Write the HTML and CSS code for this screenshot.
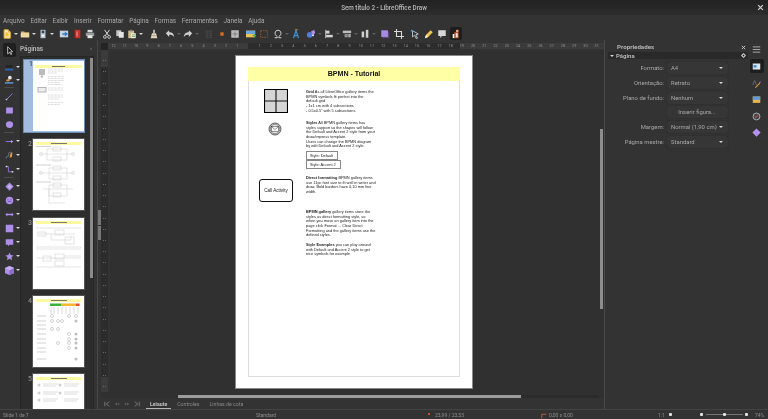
FILE: index.html
```html
<!DOCTYPE html>
<html lang="pt">
<head>
<meta charset="utf-8">
<title>Sem título 2 - LibreOffice Draw</title>
<link rel="stylesheet" href="styles.css">
</head>
<body>
<svg class="defs" aria-hidden="true">
  <symbol id="new" viewBox="0 0 12 12"><path d="M2.5 1h5l2.5 2.5V11h-7.500z" fill="#f7f2dc"/><path d="M2.500 1h5v2.500H10V11H2.500z" fill="none" stroke="#e0a92c" stroke-width="1.200"/><rect x="4" y="4" width="4" height="5" fill="#f0c040"/></symbol>
  <symbol id="open" viewBox="0 0 12 12"><path d="M1 3h4l1 1h5v6H1z" fill="#d9b778"/><path d="M1 5h10v5H1z" fill="#efd9a6"/></symbol>
  <symbol id="save" viewBox="0 0 12 12"><path d="M3 1h6v10H3z" fill="#b9c4d0"/><rect x="4.500" y="2" width="3" height="3" fill="#39434f"/><rect x="4.500" y="7" width="3" height="2" fill="#fff"/></symbol>
  <symbol id="export" viewBox="0 0 12 12"><rect x="1" y="2" width="10" height="8" fill="#c9d4e0"/><path d="M4 5h3V3l4 3-4 3V7H4z" fill="#2f7fd0"/></symbol>
  <symbol id="pdf" viewBox="0 0 12 12"><rect x="3" y="1" width="7" height="10" fill="#c8322c"/><path d="M2 2l2-1v10l-2-1z" fill="#7d1f1b"/><path d="M6 3v6" stroke="#f0c0b8"/></symbol>
  <symbol id="print" viewBox="0 0 12 12"><rect x="3" y="1" width="6" height="3" fill="#d8d8d8"/><rect x="1" y="4.500" width="10" height="4" fill="#9a9a9a"/><rect x="3" y="7.500" width="6" height="3.500" fill="#e8e8e8"/></symbol>
  <symbol id="cut" viewBox="0 0 12 12"><path d="M3 1l5 7M9 1L4 8" stroke="#d8d8d8" stroke-width="1.200"/><circle cx="3.500" cy="9.500" r="1.700" fill="none" stroke="#d8d8d8"/><circle cx="8.500" cy="9.500" r="1.700" fill="none" stroke="#d8d8d8"/></symbol>
  <symbol id="copy" viewBox="0 0 12 12"><rect x="1.500" y="1.500" width="6" height="7" fill="#c4c4c4"/><rect x="4.500" y="3.500" width="6" height="7" fill="#e4e4e4"/></symbol>
  <symbol id="paste" viewBox="0 0 12 12"><rect x="1.500" y="2" width="7" height="9" fill="#d0c090"/><rect x="3.500" y="1" width="3" height="2" fill="#888"/><rect x="5" y="5" width="5.500" height="6" fill="#eee"/><path d="M6 7h3.500M6 9h3.500" stroke="#6fa04a"/></symbol>
  <symbol id="clone" viewBox="0 0 12 12"><path d="M5 1h2v4H5z" fill="#c9c9c9"/><path d="M3.500 5h5L10 11H2z" fill="#e2d8b8"/><path d="M3 8h6" stroke="#999"/></symbol>
  <symbol id="undo" viewBox="0 0 12 12"><path d="M1 5l4-3.500V4c3 0 6 1.500 6 6-1-2.500-3-3-6-3v2.500z" fill="#cfcfcf"/></symbol>
  <symbol id="redo" viewBox="0 0 12 12"><path d="M11 5L7 1.500V4C4 4 1 5.500 1 10c1-2.500 3-3 6-3v2.500z" fill="#cfcfcf"/></symbol>
  <symbol id="grid" viewBox="0 0 12 12"><path d="M2 2.500h8M2 5h8M2 7.500h8M2 10h8M3.500 2v8M8.500 2v8" stroke="#4c4c4c" stroke-width=".8"/></symbol>
  <symbol id="point" viewBox="0 0 12 12"><rect x="4" y="4" width="4" height="4" fill="#d87020"/></symbol>
  <symbol id="glue" viewBox="0 0 12 12"><rect x="1.500" y="1.500" width="9" height="9" fill="#bcbcbc"/><path d="M6 3v6M3 6h6" stroke="#777"/></symbol>
  <symbol id="image" viewBox="0 0 12 12"><rect x="0" y="2" width="11" height="8" fill="#e9c25c"/><rect x="0" y="2" width="11" height="4" fill="#6aa6d8"/><path d="M8 8h4M10 6v4" stroke="#59b04a" stroke-width="1.500"/></symbol>
  <symbol id="dots" viewBox="0 0 12 12"><path d="M2 2h8v8H2z" fill="none" stroke="#b06a30" stroke-dasharray="1.500 1.500"/></symbol>
  <symbol id="omega" viewBox="0 0 12 12"><path d="M2 10.500h3V9C3.500 8 2.500 6.800 2.500 5.200 2.500 3 4 1.500 6 1.500s3.500 1.500 3.500 3.700C9.500 6.800 8.500 8 7 9v1.500h3" fill="none" stroke="#d4d4d4" stroke-width="1.200"/></symbol>
  <symbol id="fontwork" viewBox="0 0 12 12"><path d="M3 11L6 2l3 9M4 8h4" fill="none" stroke="#3d93d8" stroke-width="1.500"/><path d="M5 1h3" stroke="#e0a030"/></symbol>
  <symbol id="trans" viewBox="0 0 12 12"><circle cx="4.500" cy="7" r="3.500" fill="#4f7fd8"/><path d="M6 3l4-2 1 4-3 2z" fill="#b88be8"/><circle cx="8.500" cy="7.500" r="1.200" fill="#eee"/></symbol>
  <symbol id="align" viewBox="0 0 12 12"><path d="M2 1v10" stroke="#d4d4d4"/><rect x="2.500" y="2" width="4" height="3.500" fill="#d4d4d4"/><rect x="2.500" y="7" width="8" height="3" fill="#d4d4d4"/></symbol>
  <symbol id="arrange" viewBox="0 0 12 12"><rect x="1" y="2" width="10" height="3" fill="#bdbdbd"/><rect x="3" y="6" width="4" height="4" fill="#8d8d8d"/><rect x="7.500" y="6" width="3" height="4" fill="#aaa"/></symbol>
  <symbol id="distrib" viewBox="0 0 12 12"><rect x="2" y="3" width="3" height="7" fill="#d0d0d0"/><rect x="7" y="1" width="3" height="9.500" fill="#d0d0d0"/></symbol>
  <symbol id="shadow" viewBox="0 0 12 12"><rect x="3" y="3" width="8" height="8" fill="#5b4a7a"/><rect x="1.500" y="1.500" width="8" height="8" fill="#a78be0"/></symbol>
  <symbol id="crop" viewBox="0 0 12 12"><path d="M3 0v9h9M0 3h9v9" fill="none" stroke="#d8d8d8" stroke-width="1.300"/></symbol>
  <symbol id="pts" viewBox="0 0 12 12"><path d="M3 2l7 4-3 1 2 4-1.500.5-2-4L3 9.500z" fill="none" stroke="#c9d5e0"/><rect x="1" y="1" width="2" height="2" fill="#3d93d8"/></symbol>
  <symbol id="pencil" viewBox="0 0 12 12"><path d="M1 11l1.500-4L8 1.500 10.500 4 5 9.500z" fill="#f0c64e"/><path d="M1 11l1.500-4 2.500 2.500z" fill="#fff0c8"/></symbol>
  <symbol id="note" viewBox="0 0 12 12"><path d="M1.500 1.500h9v7H6L4 11V8.500H1.500z" fill="#d8d8d8"/></symbol>
  <symbol id="show" viewBox="0 0 12 12"><path d="M6 1h3v3H6z" fill="#e9a080"/><path d="M4 4h5v7H4z" fill="#d8652e"/><path d="M2 6h2v5H2z" fill="#ececec"/><path d="M6 5h2v5H6z" fill="#f2e8e0"/></symbol>
  <symbol id="select" viewBox="0 0 12 12"><path d="M3.500 1v9.500l2.500-2 1.700 3 1.300-.7-1.700-3 3-.3z" fill="none" stroke="#ddd"/></symbol>
  <symbol id="lcolor" viewBox="0 0 12 12"><rect x="1" y="3" width="9" height="3" fill="#222"/><rect x="0" y="7.500" width="11" height="2.500" fill="#2c64b4"/></symbol>
  <symbol id="fcolor" viewBox="0 0 12 12"><circle cx="6.500" cy="3.500" r="2.500" fill="#e8e8e8"/><path d="M1 7l4-2 2 2-3 2z" fill="#d88a3c"/><rect x="0" y="9.500" width="11" height="2" fill="#5b95dc"/></symbol>
  <symbol id="line" viewBox="0 0 12 12"><path d="M2 10l8-8" stroke="#9b6fe0" stroke-width="1.200"/><rect x="1" y="9" width="2" height="2" fill="#c9b4ef"/></symbol>
  <symbol id="rect" viewBox="0 0 12 12"><rect x="1.500" y="2" width="9" height="8" fill="#ad8fe8"/></symbol>
  <symbol id="ell" viewBox="0 0 12 12"><ellipse cx="6" cy="6" rx="4.800" ry="4.500" fill="#ad8fe8"/></symbol>
  <symbol id="arrowl" viewBox="0 0 12 12"><path d="M1 6h8" stroke="#8d68d8" stroke-width="1.500"/><path d="M8 4l3 2-3 2z" fill="#c0a8ef"/></symbol>
  <symbol id="curve" viewBox="0 0 12 12"><path d="M2 10c-2-4 4-2 3-5s2-4 4-3" fill="none" stroke="#6f7f9f" stroke-width="1.200"/><path d="M6 9l1.500-6L10 2 9 8z" fill="#e8a238"/></symbol>
  <symbol id="conn" viewBox="0 0 12 12"><path d="M2 2h2.500v7H10" fill="none" stroke="#9b6fe0" stroke-width="1.200"/><rect x="1" y="1" width="2" height="2" fill="#ddd"/><rect x="9" y="8" width="2" height="2" fill="#ddd"/></symbol>
  <symbol id="diam" viewBox="0 0 12 12"><path d="M6 0.500L11.500 6 6 11.500.5 6z" fill="#ad8fe8"/><circle cx="6" cy="6" r="2" fill="#c9b4ef"/></symbol>
  <symbol id="smile" viewBox="0 0 12 12"><circle cx="6" cy="6" r="5" fill="#ad8fe8"/><circle cx="4" cy="5" r=".8" fill="#5b3f96"/><circle cx="8" cy="5" r=".8" fill="#5b3f96"/><path d="M3.500 8c1.500-1.200 3.500-1.200 5 0" fill="none" stroke="#5b3f96"/></symbol>
  <symbol id="barrow" viewBox="0 0 12 12"><path d="M.5 6L3 3.500v1.500h6V3.500L11.500 6 9 8.500V7H3v1.500z" fill="#ad8fe8"/></symbol>
  <symbol id="flow" viewBox="0 0 12 12"><rect x="1" y="1" width="10" height="10" fill="#ad8fe8"/></symbol>
  <symbol id="call" viewBox="0 0 12 12"><path d="M1 1.500h10v7.500H6L4 11V9H1z" fill="#ad8fe8"/></symbol>
  <symbol id="star" viewBox="0 0 12 12"><path d="M6 .5l1.600 3.600 3.900.4-2.900 2.600.8 3.900L6 9l-3.400 2 .8-3.900L.5 4.500l3.900-.4z" fill="#ad8fe8"/></symbol>
  <symbol id="cube" viewBox="0 0 12 12"><path d="M6 0l6 2.500v7L6 12 0 9.500v-7z" fill="#ad8fe8"/><path d="M6 5.500L12 2.500v7L6 12z" fill="#8a6ccf"/><path d="M6 5.500L0 2.500 6 0l6 2.500z" fill="#c4aef0"/></symbol>
  <symbol id="menu" viewBox="0 0 12 12"><path d="M1 2.500h10M1 6h10M1 9.500h10" stroke="#aaa" stroke-width="1.300"/></symbol>
  <symbol id="props" viewBox="0 0 12 12"><rect x="1" y="2" width="10" height="8" fill="#d8e4f0"/><rect x="2" y="4" width="4" height="3.500" fill="#4d93d8"/></symbol>
  <symbol id="styles" viewBox="0 0 12 12"><path d="M1 8l2.500-6L6 8" fill="none" stroke="#777"/><path d="M4 11l6-6 1 1-6 6z" fill="#e09848"/><path d="M9 5l2-2 1 1-2 2z" fill="#a068c8"/></symbol>
  <symbol id="gallery" viewBox="0 0 12 12"><rect x="1" y="2" width="10" height="8.500" fill="#e9b54c"/><rect x="1" y="2" width="10" height="4.500" fill="#5d9cd8"/></symbol>
  <symbol id="nav" viewBox="0 0 12 12"><circle cx="6" cy="6" r="4.600" fill="#444" stroke="#b8c4d0" stroke-width="1.100"/><path d="M8.500 3.500L6.500 6.500 3.500 8.500 5.500 5.500z" fill="#d85a48"/></symbol>
  <symbol id="shapes" viewBox="0 0 12 12"><path d="M6 .5L11.500 6 6 11.500.5 6z" fill="#b690f0"/></symbol>
  <symbol id="gear" viewBox="0 0 12 12"><circle cx="6" cy="6" r="3.500" fill="none" stroke="#ccc" stroke-width="2.500"/><path d="M6 0v3M6 9v3M0 6h3M9 6h3" stroke="#ccc" stroke-width="1.500"/></symbol>
  <symbol id="close" viewBox="0 0 12 12"><path d="M2 2l8 8M10 2l-8 8" stroke="#cfcfcf" stroke-width="2.200"/></symbol>
  <symbol id="gridpic" viewBox="0 0 24 24"><rect width="24" height="24" fill="#fff"/><path d="M2 0v24M4 0v24M6 0v24M8 0v24M10 0v24M14 0v24M16 0v24M18 0v24M20 0v24M22 0v24M0 2h24M0 4h24M0 6h24M0 8h24M0 10h24M0 14h24M0 16h24M0 18h24M0 20h24M0 22h24" stroke="#888" stroke-width=".4"/><path d="M.5.500h23v23H.5zM12 0v24M0 12h24" fill="none" stroke="#000" stroke-width="1.100"/></symbol>
  <symbol id="navfirst" viewBox="0 0 8 8"><path d="M1 1v6M7 1L3 4l4 3" fill="none" stroke="#8a8a8a"/></symbol>
  <symbol id="navprev" viewBox="0 0 8 8"><path d="M1 4l3-2v4zM4 4l3-2v4z" fill="#5c5c5c"/></symbol>
  <symbol id="navnext" viewBox="0 0 8 8"><path d="M7 4L4 2v4zM4 4L1 2v4z" fill="#5c5c5c"/></symbol>
  <symbol id="navlast" viewBox="0 0 8 8"><path d="M7 1v6M1 1l4 3-4 3" fill="none" stroke="#8a8a8a"/></symbol>
</svg>

<div class="app">
  <header class="titlebar">
    <span class="title">Sem título 2 - LibreOffice Draw</span>
    <svg class="winclose"><use href="#close"/></svg>
  </header>

  <nav class="menubar">
    <span>Arquivo</span><span>Editar</span><span>Exibir</span><span>Inserir</span><span>Formatar</span><span>Página</span><span>Formas</span><span>Ferramentas</span><span>Janela</span><span>Ajuda</span>
  </nav>

  <div class="toolbar">
    <span class="tb"><svg><use href="#new"/></svg></span><i class="dd"></i>
    <span class="tb"><svg><use href="#open"/></svg></span><i class="dd"></i>
    <span class="tb"><svg><use href="#save"/></svg></span><i class="dd"></i>
    <span class="tb m3"><svg><use href="#export"/></svg></span>
    <span class="tb m1"><svg><use href="#pdf"/></svg></span>
    <span class="tb m1"><svg><use href="#print"/></svg></span>
    <span class="tb m5"><svg><use href="#cut"/></svg></span>
    <span class="tb m1"><svg><use href="#copy"/></svg></span>
    <span class="tb"><svg><use href="#paste"/></svg></span><i class="dd"></i>
    <span class="tb m4"><svg><use href="#clone"/></svg></span>
    <span class="tb m4"><svg><use href="#undo"/></svg></span><i class="dd dim"></i>
    <span class="tb"><svg><use href="#redo"/></svg></span><i class="dd dim"></i>
    <span class="tb m3"><svg><use href="#grid"/></svg></span>
    <span class="tb m1"><svg><use href="#point"/></svg></span>
    <span class="tb m1"><svg><use href="#glue"/></svg></span>
    <span class="tb m4"><svg><use href="#image"/></svg></span>
    <span class="tb m1"><svg><use href="#dots"/></svg></span>
    <span class="tb m2"><svg><use href="#omega"/></svg></span><i class="dd dim"></i>
    <span class="tb"><svg><use href="#fontwork"/></svg></span>
    <span class="tb m3"><svg><use href="#trans"/></svg></span><i class="dd dim"></i>
    <span class="tb"><svg><use href="#align"/></svg></span><i class="dd dim"></i>
    <span class="tb"><svg><use href="#arrange"/></svg></span><i class="dd dim"></i>
    <span class="tb"><svg><use href="#distrib"/></svg></span><i class="dd dim"></i>
    <span class="tb m2"><svg><use href="#shadow"/></svg></span>
    <span class="tb m2"><svg><use href="#crop"/></svg></span>
    <span class="tb m4"><svg><use href="#pts"/></svg></span>
    <span class="tb m2"><svg><use href="#pencil"/></svg></span>
    <span class="tb m1"><svg><use href="#note"/></svg></span>
    <span class="tb m2 active"><svg><use href="#show"/></svg></span>
  </div>

  <main class="main">
    <aside class="tools">
      <span class="tool active"><svg><use href="#select"/></svg></span>
      <span class="tool gaptop short"><svg><use href="#lcolor"/></svg><i class="dd"></i></span>
      <span class="tool short"><svg><use href="#fcolor"/></svg><i class="dd"></i></span>
      <hr class="sep">
      <span class="tool"><svg><use href="#line"/></svg></span>
      <span class="tool"><svg><use href="#rect"/></svg></span>
      <span class="tool"><svg><use href="#ell"/></svg></span>
      <hr class="sep">
      <span class="tool"><svg><use href="#arrowl"/></svg><i class="dd"></i></span>
      <span class="tool"><svg><use href="#curve"/></svg><i class="dd"></i></span>
      <span class="tool"><svg><use href="#conn"/></svg><i class="dd"></i></span>
      <hr class="sep">
      <span class="tool"><svg><use href="#diam"/></svg><i class="dd"></i></span>
      <span class="tool"><svg><use href="#smile"/></svg><i class="dd"></i></span>
      <span class="tool"><svg><use href="#barrow"/></svg><i class="dd"></i></span>
      <span class="tool"><svg><use href="#flow"/></svg><i class="dd"></i></span>
      <span class="tool"><svg><use href="#call"/></svg><i class="dd"></i></span>
      <span class="tool"><svg><use href="#star"/></svg><i class="dd"></i></span>
      <span class="tool"><svg><use href="#cube"/></svg><i class="dd"></i></span>
    </aside>

    <section class="pages">
      <h2 class="pages-title">Páginas <svg class="x"><use href="#close"/></svg></h2>
      <div class="pagelist">
        <div class="thumbs">
          <div class="thumb selected">
            <b>1</b>
            <svg class="sheet" viewBox="0 0 51 70">
              <rect width="51" height="70" fill="#fff"/><rect x="2" y="4" width="47" height="3" fill="#fdf9a0"/>
              <rect x="19" y="5" width="13" height="1" fill="#777"/>
              <rect x="6" y="8" width="6" height="6" fill="#bbb"/>
              <circle cx="9" cy="15.500" r="1.300" fill="#bbb"/>
              <rect x="5" y="26.500" width="8" height="4.500" fill="#eee" stroke="#999" stroke-width=".7"/>
              <path d="M15 8h15M15 10h15M15 12h9M15 15.500h16M15 17.500h16M15 19.500h16M15 21.500h12M15 23.500h14M15 27h15M15 29h15M15 34h15M15 36h15M15 38h11M15 41.500h15M15 43.500h12" stroke="#aaa" stroke-width=".8" stroke-dasharray="1 .4"/>
            </svg>
          </div>
          <div class="thumb">
            <b>2</b>
            <svg class="sheet" viewBox="0 0 51 71">
              <rect width="51" height="71" fill="#fff"/><rect x="3" y="3" width="45" height="3" fill="#fdf9a0"/>
              <rect x="18" y="4" width="16" height="1" fill="#777"/>
              <path d="M3 7.500h15M3 26h15M3 43h15" stroke="#888" stroke-width=".7"/>
              <g fill="none" stroke="#888" stroke-width=".4"><path d="M6 15h35M14 15v-5h20v5M14 15v6h20v-6"/><path d="M6 34h35M16 34v-5h18v5M16 34v6h18v-6"/><path d="M10 50h30M16 50v-4h18v4M16 50v7h18v-7M16 50v14h16"/><circle cx="8" cy="15" r="1.500"/><circle cx="40" cy="15" r="1.500"/><circle cx="8" cy="34" r="1.500"/><circle cx="40" cy="34" r="1.500"/><rect x="20" y="8" width="8" height="4"/><rect x="20" y="18" width="8" height="4"/><rect x="20" y="27" width="8" height="4"/><rect x="20" y="37" width="8" height="4"/><rect x="20" y="44" width="8" height="4"/><rect x="20" y="54" width="8" height="4"/></g>
            </svg>
          </div>
          <div class="thumb">
            <b>3</b>
            <svg class="sheet" viewBox="0 0 51 71">
              <rect width="51" height="71" fill="#fff"/><rect x="3" y="3" width="45" height="3" fill="#fdf9a0"/>
              <rect x="18" y="4" width="16" height="1" fill="#777"/>
              <g fill="none" stroke="#888" stroke-width=".4"><path d="M3 10h45M3 29h45v1M3 31h45M3 49h45M6 16h36M18 16v6h20v-4"/><rect x="5" y="14" width="8" height="4"/><rect x="22" y="12" width="9" height="5"/><rect x="32" y="19" width="9" height="7"/><rect x="10" y="38" width="8" height="5"/><rect x="22" y="36" width="9" height="5"/><rect x="22" y="43" width="9" height="5"/><path d="M4 40h44M31 38h17"/></g>
            </svg>
          </div>
          <div class="thumb">
            <b>4</b>
            <svg class="sheet" viewBox="0 0 51 71">
              <rect width="51" height="71" fill="#fff"/><rect x="3" y="3" width="45" height="3" fill="#fdf9a0"/>
              <rect x="18" y="4" width="16" height="1" fill="#777"/>
              <rect x="17" y="7.500" width="11" height="2.500" fill="#3faf3f"/><rect x="28" y="7.500" width="15" height="2.500" fill="#f5b82e"/><rect x="43" y="7.500" width="3.500" height="2.500" fill="#e84a35"/>
              <path d="M18 11v7M21 11v7M25 11v7M29 11v7M33 11v7M37 11v7M41 11v7M45 11v7" stroke="#aaa" stroke-width=".8"/>
              <path d="M4 20h9M4 25h9M4 29h9M4 33h9M4 38h9M4 43h9M4 47h9M4 52h9M4 56h9M4 63h9" stroke="#aaa" stroke-width="1"/>
              <g fill="none" stroke="#999" stroke-width=".8"><circle cx="19" cy="20" r="1.500"/><circle cx="19" cy="25" r="1.500"/><circle cx="25" cy="25" r="1.500"/><circle cx="29" cy="25" r="1.500"/><circle cx="36" cy="20" r="1.500"/><circle cx="43" cy="20" r="1.500"/><circle cx="19" cy="33" r="1.500"/><circle cx="25" cy="33" r="1.500"/><circle cx="36" cy="38" r="1.500"/><circle cx="36" cy="43" r="1.500"/><circle cx="36" cy="47" r="1.500"/><circle cx="36" cy="52" r="1.500"/><circle cx="25" cy="47" r="1.500"/></g>
              <g fill="#888"><circle cx="43" cy="25" r="1.500"/><circle cx="43" cy="38" r="1.500"/><circle cx="43" cy="43" r="1.500"/><circle cx="43" cy="47" r="1.500"/><circle cx="43" cy="52" r="1.500"/><circle cx="43" cy="63" r="1.500"/></g>
            </svg>
          </div>
          <div class="thumb">
            <b>5</b>
            <svg class="sheet" viewBox="0 0 51 71">
              <rect width="51" height="71" fill="#fff"/><rect x="3" y="3" width="45" height="3" fill="#fdf9a0"/>
              <rect x="18" y="4" width="16" height="1" fill="#777"/>
              <path d="M10 10h15M10 12h13M10 18h15M10 20h13M10 25h15M10 27h13M31 10h15M31 12h13M31 18h15M31 20h13M31 25h15M31 27h13" stroke="#bbb" stroke-width=".9"/>
              <g fill="#aaa"><circle cx="6" cy="11" r="1.500"/><circle cx="6" cy="19" r="1.500"/><circle cx="27" cy="11" r="1.500"/><circle cx="27" cy="19" r="1.500"/><circle cx="6" cy="26" r="1.500"/></g>
            </svg>
          </div>
        </div>
        <div class="panelscroll"></div>
      </div>
    </section>

    <div class="split"><span class="grip"></span><span class="grip second"></span></div>

    <section class="work">
      <div class="hruler">
        <span class="corner"></span>
        <div class="rnums"><span>12</span><span>11</span><span>10</span><span>9</span><span>8</span><span>7</span><span>6</span><span>5</span><span>4</span><span>3</span><span>2</span><span>1</span><span class="zero"></span><span>1</span><span>2</span><span>3</span><span>4</span><span>5</span><span>6</span><span>7</span><span>8</span><span>9</span><span>10</span><span>11</span><span>12</span><span>13</span><span>14</span><span>15</span><span>16</span><span>17</span><span>18</span><span>19</span><span>20</span><span>21</span><span>22</span><span>23</span><span>24</span><span>25</span><span>26</span><span>27</span><span>28</span><span>29</span><span>30</span><span>31</span></div>
      </div>
      <div class="middle">
        <div class="vruler"><span></span><span></span><span></span><span></span><span></span><span></span><span></span><span></span><span></span><span></span><span></span><span></span><span></span><span></span><span></span><span></span><span></span><span></span><span></span><span></span><span></span><span></span><span></span><span></span><span></span><span></span><span></span><span></span><span></span><span></span></div>
        <div class="canvas">
          <article class="sheetpage">
            <div class="sheetframe"></div>
            <h1 class="ptitle">BPMN - Tutorial</h1>
            <svg class="gridpic"><use href="#gridpic"/></svg>
            <svg class="envelope" viewBox="0 0 14 14"><circle cx="7" cy="7" r="6" fill="#e8e8e8" stroke="#222" stroke-width=".7"/><circle cx="7" cy="7" r="4.800" fill="none" stroke="#222" stroke-width=".5"/><rect x="3.500" y="4.500" width="7" height="5" fill="#fff" stroke="#222" stroke-width=".5"/><path d="M3.500 4.500L7 7.500l3.500-3" fill="none" stroke="#222" stroke-width=".5"/></svg>
            <div class="activity">Call Activity</div>
            <p class="note n1"><b>Grid</b> As all LibreOffice gallery items the<br>BPMN symbols fit perfect into the<br>default grid<br>- 1x1 cm with 4 subsections<br>- 0.5x0.5" with 5 subsections</p>
            <p class="note n2"><b>Styles</b> All BPMN gallery items has<br>styles support so the shapes will follow<br>the Default and Accent 2 style from your<br>draw/impress template.<br>Users can change the BPMN diagram<br>by edit Default and Accent 2 style.</p>
            <div class="stylebox s1">Style: Default</div>
            <div class="stylebox s2">Style: Accent 2</div>
            <p class="note n3"><b>Direct formatting</b> BPMN gallery items<br>use 11pc font size to fit well in writer and<br>draw. Bold borders have 0,10 mm line<br>width.</p>
            <p class="note n4"><b>BPMN gallery</b> gallery items store the<br>styles as direct formatting style, so<br>when you move an gallery item into the<br>page click Format ... Clear Direct<br>Formatting and the gallery items use the<br>defined styles.</p>
            <p class="note n5"><b>Style Examples</b> you can play around<br>with Default and Accent 2 style to get<br>nice symbols for example</p>
          </article>
        </div>
        <div class="vscroll"><span></span></div>
      </div>
      <div class="hscroll"><span></span></div>
      <div class="tabs">
        <span class="navbtns"><svg><use href="#navfirst"/></svg><svg><use href="#navprev"/></svg><svg><use href="#navnext"/></svg><svg><use href="#navlast"/></svg></span>
        <span class="tab on">Leiaute</span><span class="tab">Controles</span><span class="tab">Linhas de cota</span>
      </div>
    </section>

    <aside class="sidebar">
      <div class="deck">
        <div class="deck-title"><span>Propriedades</span><svg class="x"><use href="#close"/></svg></div>
        <div class="section"><i class="dd"></i><span>Página</span><svg class="gear"><use href="#gear"/></svg></div>
        <div class="form">
          <label>Formato:</label><div class="combo"><span>A4</span><i class="dd"></i></div>
          <label>Orientação:</label><div class="combo"><span>Retrato</span><i class="dd"></i></div>
          <label>Plano de fundo:</label><div class="combo"><span>Nenhum</span><i class="dd"></i></div>
          <span></span><div class="combo btn">Inserir figura...</div>
          <label>Margem:</label><div class="combo"><span>Normal (1,90 cm)</span><i class="dd"></i></div>
          <label>Página mestre:</label><div class="combo"><span>Standard</span><i class="dd"></i></div>
        </div>
      </div>
      <div class="tabbar">
        <svg><use href="#menu"/></svg>
        <span class="tabon"><svg><use href="#props"/></svg></span>
        <svg><use href="#styles"/></svg>
        <svg><use href="#gallery"/></svg>
        <svg><use href="#nav"/></svg>
        <svg><use href="#shapes"/></svg>
      </div>
    </aside>
  </main>

  <footer class="status">
    <span class="st-slide">Slide 1 de 7</span>
    <span class="st-master">Standard</span>
    <span class="st-pos"><i class="reddot"></i>23,99 / 23,53</span>
    <span class="st-size"><svg viewBox="0 0 8 8"><path d="M1 8V3h6" fill="none" stroke="#c8642c" stroke-width="1.200"/></svg>0,00 x 0,00</span>
    <span class="st-fit">1:1<i class="knob"></i></span>
    <span class="st-zoom"><i class="knob"></i><span class="slider"><i class="knob"></i></span><i class="knob"></i></span>
    <span class="st-pct">74%</span>
  </footer>
</div>
</body>
</html>
```

FILE: styles.css
```css
* { box-sizing: border-box; }
html, body { margin: 0; width: 768px; height: 419px; overflow: hidden; background: #333; }
body { font-family: Roboto, "Noto Sans", sans-serif; font-size: 6.5px; color: #b4b4b4; }
.defs { position: absolute; width: 0; height: 0; }
i { font-style: normal; display: block; }

.app { width: 768px; height: 419px; display: flex; flex-direction: column; filter: blur(.35px); }

.titlebar { height: 15px; flex: none; display: flex; align-items: center; justify-content: center; background: linear-gradient(#222, #2d2d2d); position: relative; }
.title { font-size: 6.300px; color: #b8b8b8; font-weight: 500; }
.winclose { position: absolute; right: 4px; top: 4px; width: 7px; height: 7px; }

.menubar { height: 12px; flex: none; display: flex; align-items: center; padding-left: 3px; gap: 5.700px; background: #333; font-size: 6.400px; color: #a8a8a8; }

.toolbar { height: 13px; flex: none; display: flex; align-items: center; padding-left: 1px; background: #333; }
.tb { width: 12px; height: 13px; flex: none; display: flex; align-items: center; justify-content: center; border-radius: 2px; }
.tb svg { width: 10px; height: 10px; }
.tb.active { background: #1d1d1d; }
.m1 { margin-left: 1px; } .m2 { margin-left: 2px; } .m3 { margin-left: 3px; } .m4 { margin-left: 4px; } .m5 { margin-left: 5px; }
.dd { width: 0; height: 0; flex: none; border-left: 2px solid transparent; border-right: 2px solid transparent; border-top: 2px solid #d8d8d8; }
.toolbar .dd { margin: 0 1px; }
.dd.dim { border-top-color: #5e5e5e; }

.main { flex: 1; min-height: 0; display: flex; background: #333; }

.tools { width: 20px; flex: none; display: flex; flex-direction: column; padding: 3px 0 0 3px; }
.tool { height: 14px; width: 16px; flex: none; display: flex; align-items: center; gap: 2px; padding-left: 2px; border-radius: 2px; }
.tool svg { width: 9px; height: 9px; flex: none; }
.tool.active { width: 13px; background: #1f1f1f; }
.tool.short { height: 12.500px; }
.gaptop { margin-top: 4px; }
.sep { width: 10px; height: 1px; margin: 1px 0 1px 1px; flex: none; border: 0; background: #4c4c4c; }

.pages { width: 77px; flex: none; display: flex; flex-direction: column; }
.pages-title { margin: 0; height: 16px; flex: none; display: flex; align-items: center; justify-content: space-between; padding: 2px 4px 0 0; font-size: 6.400px; font-weight: 700; color: #b0b0b0; }
.pages-title .x { width: 4px; height: 4px; opacity: .25; }
.pagelist { flex: 1; min-height: 0; display: flex; background: #2d2d2d; border: 1px solid #262626; border-bottom: 0; margin-right: 3px; overflow: hidden; padding: 2px 0 0 2px; }
.thumbs { width: 62px; flex: none; display: flex; flex-direction: column; gap: 7.300px; }
.thumb { height: 71px; flex: none; display: flex; justify-content: flex-end; padding-right: 1px; position: relative; }
.thumb b { position: absolute; left: 5px; top: 1px; font-weight: 500; font-size: 7px; color: #8a8a8a; }
.sheet { width: 51px; height: 71px; flex: none; outline: 1px solid #555; }
.sheet g, .sheet > path { opacity: .55; }
.thumb.selected { height: 74px; padding-top: 1px; padding-right: 0; background: #a2bce0; border: 1px solid #6f8cb5; margin-bottom: -1px; }
.thumb.selected b { color: #3f4f66; left: 5px; top: 0; }
.thumb.selected .sheet { outline: 0; height: 70px; }
.panelscroll { width: 3px; height: 220px; margin: -1px 0 0 5px; flex: none; background: #8b8b8b; }

.split { width: 4px; flex: none; display: flex; flex-direction: column; border-left: 1px solid #484848; }
.grip { width: 3px; height: 15px; margin-top: 170px; background: #777; flex: none; }
.grip.second { height: 14px; margin-top: 1px; }

.work { flex: 1; min-width: 0; display: flex; flex-direction: column; }
.hruler { height: 10px; flex: none; display: flex; align-items: flex-start; padding-top: 3px; }
.corner { width: 7px; height: 7px; flex: none; background: #242424; }
.rnums { flex: 1; height: 6px; display: flex; overflow: hidden; background-image: linear-gradient(90deg, #3b3b3b 140px, #2c2c2c 140px, #2c2c2c 352px, #3b3b3b 352px); }
.rnums span { width: 11.240px; flex: none; font-size: 3.800px; line-height: 6px; text-align: center; color: #8f8f8f; }

.middle { flex: 1; min-height: 0; display: flex; }
.vruler { width: 7px; flex: none; margin-right: 2px; display: flex; flex-direction: column; overflow: hidden; background-image: linear-gradient(#3b3b3b 17px, #2c2c2c 17px, #2c2c2c 327px, #3b3b3b 327px, #3b3b3b 344px, transparent 344px); }
.vruler span { height: 11.240px; flex: none; border-bottom: 1px dotted #6a6a6a; margin: 0 2px; }
.canvas { flex: 1; min-width: 0; background: #303030; padding: 6px 0 0 126px; overflow: hidden; }
.sheetpage { position: relative; width: 236px; height: 332px; background: #fff; outline: 1px solid #888; color: #222; font-family: "Liberation Sans", Arial, sans-serif; }
.sheetframe { position: absolute; left: 12px; top: 11px; width: 212px; height: 310px; border: 1px solid #ddd; }
.ptitle { position: absolute; left: 12px; top: 11px; width: 212px; height: 14px; margin: 0; background: #ffffa6; font-size: 7.100px; line-height: 14px; text-align: center; color: #111; }
.gridpic { position: absolute; left: 28px; top: 33px; width: 24px; height: 24px; }
.envelope { position: absolute; left: 32px; top: 66px; width: 14px; height: 14px; }
.activity { position: absolute; left: 23px; top: 123px; width: 34px; height: 23px; border: 1.300px solid #111; border-radius: 3px; font-size: 4.600px; display: flex; align-items: center; justify-content: center; }
.note { position: absolute; left: 70px; margin: 0; font-size: 3.900px; line-height: 4.650px; white-space: nowrap; color: #222; }
.n1 { top: 34px; } .n2 { top: 65px; } .n3 { top: 120px; } .n4 { top: 154px; } .n5 { top: 187px; }
.stylebox { position: absolute; left: 70px; height: 9px; border: 1px solid #888; padding: 0 3px; font-size: 3.900px; line-height: 7px; white-space: nowrap; }
.s1 { top: 95px; width: 32px; } .s2 { top: 104px; width: 35px; }

.vscroll { width: 7px; flex: none; padding-left: 3px; background: #303030; }
.vscroll span { display: block; width: 3px; height: 180px; margin-top: 79px; background: #8d8d8d; }

.hscroll { height: 6px; flex: none; padding: 3px 6px 0 77px; background: #303030; }
.hscroll span { display: block; width: 343px; height: 3px; background: #9b9b9b; box-shadow: 78px 0 0 #2b2b2b; }

.tabs { height: 11px; flex: none; display: flex; align-items: stretch; padding-left: 3px; font-size: 5.200px; background: #333; }
.navbtns { display: flex; align-items: center; gap: 4px; width: 42px; flex: none; }
.navbtns svg { width: 6px; height: 6px; flex: none; }
.tab { padding: 1px 4px 0; margin-right: 2px; display: flex; align-items: center; color: #8a8a8a; border-bottom: 1px solid transparent; }
.tab.on { color: #c0c0c0; font-weight: 700; border-bottom-color: #b4b4b4; }

.sidebar { width: 164px; flex: none; display: flex; border-left: 1px solid #4a4a4a; }
.deck { width: 143px; flex: none; padding-left: 3px; }
.deck-title { height: 10px; margin-top: 2px; padding: 0 0 0 9px; display: flex; align-items: center; justify-content: space-between; font-size: 6.200px; font-weight: 700; color: #b4b4b4; }
.deck-title .x { width: 5px; height: 5px; margin-right: 2px; }
.section { height: 7px; display: flex; align-items: center; gap: 2px; padding: 0 2px; background: #292929; font-size: 6px; font-weight: 700; color: #b4b4b4; }
.section span { flex: 1; }
.gear { width: 5px; height: 5px; flex: none; }
.form { display: grid; grid-template-columns: 56px 61px; column-gap: 3px; row-gap: 2.800px; margin-top: 3px; align-items: center; }
.form label { text-align: right; color: #a8a8a8; font-size: 5.900px; white-space: nowrap; }
.combo { height: 12px; display: flex; align-items: center; justify-content: space-between; padding: 0 5px 0 4px; background: #363636; border-radius: 2px; box-shadow: 0 0 1px #1c1c1c; color: #a8a8a8; font-size: 5.900px; white-space: nowrap; }
.combo .dd { border-left-width: 2.500px; border-right-width: 2.500px; border-top-width: 2.500px; }
.combo.btn { justify-content: center; }
.tabbar { flex: 1; display: flex; flex-direction: column; align-items: center; padding: 4.500px 3px 0 0; gap: 7.600px; }
.tabbar svg { width: 9px; height: 9px; flex: none; }
.tabon { width: 14px; height: 14px; flex: none; display: flex; align-items: center; justify-content: center; margin: -2px 0; background: #1e1e1e; border-radius: 2px; }

.status { height: 10px; flex: none; display: flex; align-items: center; font-size: 5px; color: #8e8e8e; background: #333; border-top: 1px solid #444; }
.st-slide { margin-left: 3px; width: 253px; }
.st-master { width: 172px; }
.st-pos { width: 122px; display: flex; align-items: center; gap: 5px; }
.reddot { width: 2px; height: 2px; background: #c8502c; margin-bottom: 2px; }
.st-size { width: 99px; margin-left: -9px; display: flex; align-items: center; gap: 2px; }
.st-size svg { width: 6px; height: 6px; }
.st-fit { width: 30px; margin-left: 18px; display: flex; align-items: center; gap: 4px; }
.knob { width: 3px; height: 3px; border-radius: 1px; background: #e2e2e2; flex: none; }
.st-zoom { width: 48px; margin-left: 12px; flex: none; display: flex; align-items: center; justify-content: space-between; }
.slider { width: 37px; height: 1px; background: #777; display: flex; align-items: center; justify-content: center; }
.st-pct { margin-left: 7px; }
```
